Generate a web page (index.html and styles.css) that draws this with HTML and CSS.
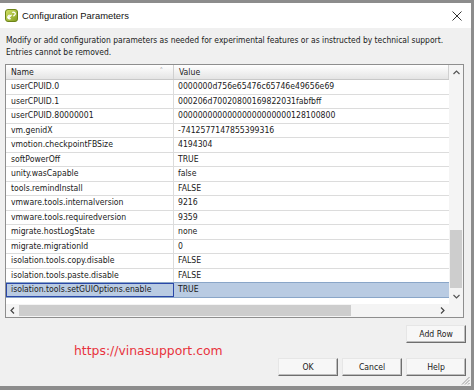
FILE: index.html
```html
<!DOCTYPE html>
<html>
<head>
<meta charset="utf-8">
<link rel="stylesheet" href="styles.css">
</head>
<body>
<div class="window">
  <div class="titlebar">
    <svg class="app-icon" width="13" height="13" viewBox="0 0 13 13">
      <defs>
        <linearGradient id="g" x1="0" y1="0" x2="1" y2="1">
          <stop offset="0" stop-color="#d6e46a"/>
          <stop offset="1" stop-color="#7f9a1c"/>
        </linearGradient>
      </defs>
      <rect x="0.5" y="0.5" width="12" height="12" rx="2.5" fill="url(#g)" stroke="#6d8418"/>
      <path d="M4 8.5 L6.2 6.3 M5.2 9.6 a1.6 1.6 0 0 1 -2.2 -2.2 l1.2 -1.2 M7.8 3.4 a1.6 1.6 0 0 1 2.2 2.2 l-1.2 1.2" fill="none" stroke="#fff" stroke-width="1.3" stroke-linecap="round"/>
    </svg>
    <span class="title">Configuration Parameters</span>
    <svg class="close" width="10" height="10" viewBox="0 0 10 10">
      <path d="M0.5 0.5 L9.5 9.5 M9.5 0.5 L0.5 9.5" stroke="#333" stroke-width="1"/>
    </svg>
  </div>
  <div class="desc">Modify or add configuration parameters as needed for experimental features or as instructed by technical support.<br>Entries cannot be removed.</div>
  <div class="table">
    <div class="list">
      <div class="head">
        <div class="hcell">Name<span class="sort">&#x02C4;</span></div>
        <div class="hcell">Value</div>
      </div>
      <div class="row"><div class="c1">userCPUID.0</div><div class="c2">0000000d756e65476c65746e49656e69</div></div>
      <div class="row"><div class="c1">userCPUID.1</div><div class="c2">000206d70020800169822031fabfbff</div></div>
      <div class="row"><div class="c1">userCPUID.80000001</div><div class="c2">00000000000000000000000128100800</div></div>
      <div class="row"><div class="c1">vm.genidX</div><div class="c2">-7412577147855399316</div></div>
      <div class="row"><div class="c1">vmotion.checkpointFBSize</div><div class="c2">4194304</div></div>
      <div class="row"><div class="c1">softPowerOff</div><div class="c2">TRUE</div></div>
      <div class="row"><div class="c1">unity.wasCapable</div><div class="c2">false</div></div>
      <div class="row"><div class="c1">tools.remindInstall</div><div class="c2">FALSE</div></div>
      <div class="row"><div class="c1">vmware.tools.internalversion</div><div class="c2">9216</div></div>
      <div class="row"><div class="c1">vmware.tools.requiredversion</div><div class="c2">9359</div></div>
      <div class="row"><div class="c1">migrate.hostLogState</div><div class="c2">none</div></div>
      <div class="row"><div class="c1">migrate.migrationId</div><div class="c2">0</div></div>
      <div class="row"><div class="c1">isolation.tools.copy.disable</div><div class="c2">FALSE</div></div>
      <div class="row"><div class="c1">isolation.tools.paste.disable</div><div class="c2">FALSE</div></div>
      <div class="row selected"><div class="c1">isolation.tools.setGUIOptions.enable</div><div class="c2">TRUE</div></div>
    </div>
    <div class="vscroll">
      <svg class="arrow" width="7" height="5" viewBox="0 0 7 5"><path d="M0.5 4 L3.5 1 L6.5 4" fill="none" stroke="#555" stroke-width="1.2"/></svg>
      <div class="vtrack"><div class="vthumb"></div></div>
      <svg class="arrow" width="7" height="5" viewBox="0 0 7 5"><path d="M0.5 1 L3.5 4 L6.5 1" fill="none" stroke="#555" stroke-width="1.2"/></svg>
    </div>
    <div class="hscroll">
      <svg class="harrow" width="5" height="7" viewBox="0 0 5 7"><path d="M4 0.5 L1 3.5 L4 6.5" fill="none" stroke="#444" stroke-width="1.2"/></svg>
      <div class="htrack"><div class="hthumb"></div></div>
      <svg class="harrow" width="5" height="7" viewBox="0 0 5 7"><path d="M1 0.5 L4 3.5 L1 6.5" fill="none" stroke="#444" stroke-width="1.2"/></svg>
    </div>
    <div class="corner"></div>
  </div>
  <div class="addrow"><button class="btn">Add Row</button></div>
  <div class="actions">
    <button class="btn">OK</button>
    <button class="btn">Cancel</button>
    <button class="btn">Help</button>
  </div>
  <div class="watermark">https://vinasupport.com</div>
  <svg class="grip" width="9" height="9" viewBox="0 0 9 9">
    <path d="M8.5 1 L1 8.5 M8.5 4 L4 8.5 M8.5 7 L7 8.5" stroke="#9a9a9a" stroke-width="1"/>
  </svg>
</div>
</body>
</html>
```
FILE: styles.css
```css
html, body {
  margin: 0;
  padding: 0;
}
body {
  background: #8c8c8c;
  width: 474px;
  height: 390px;
  overflow: hidden;
  font-family: "DejaVu Sans Condensed", "DejaVu Sans", sans-serif;
  font-size: 8.6px;
  color: #1a1a1a;
}
.window {
  position: relative;
  margin: 3px 3px 0 0;
  height: 383px;
  background: #f0f0f0;
  display: flex;
  flex-direction: column;
}
.titlebar {
  height: 25px;
  background: #ffffff;
  display: flex;
  align-items: center;
  padding-left: 5px;
  padding-right: 9px;
}
.app-icon {
  flex: none;
}
.title {
  margin-left: 4px;
  font-family: "Liberation Sans", sans-serif;
  font-size: 9.4px;
  color: #111;
  flex: 1;
}
.close {
  flex: none;
}
.desc {
  padding: 6px 6px 0 6px;
  line-height: 12px;
  height: 30px;
  font-size: 8.45px;
  color: #1a1a1a;
}
.table {
  margin-left: 5px;
  width: 457px;
  border: 1px solid #8e8e8e;
  background: #ffffff;
  display: grid;
  grid-template-columns: 1fr 14px;
  grid-template-rows: 239px 13px;
}
.list {
  overflow: hidden;
}
.head {
  display: grid;
  grid-template-columns: 168px 1fr;
  height: 14px;
  background: linear-gradient(#ffffff, #e4e4e4);
  border-bottom: 1px solid #c8c8c8;
}
.hcell {
  padding-left: 5px;
  line-height: 14px;
  position: relative;
  border-right: 1px solid #d0d0d0;
  color: #222;
}
.sort {
  position: absolute;
  right: 10px;
  top: 0;
  color: #b0b0b0;
  font-size: 8px;
}
.row {
  display: grid;
  grid-template-columns: 168px 1fr;
  height: 14.5px;
  box-sizing: border-box;
  border-bottom: 1px solid #dcdcdc;
  line-height: 13.5px;
  white-space: nowrap;
}
.c1 {
  padding-left: 5px;
  border-right: 1px solid #dcdcdc;
  overflow: hidden;
}
.c2 {
  padding-left: 4px;
  overflow: hidden;
}
.row.selected {
  background: #b9cbe2;
  border-top: 1px solid #8aa6c8;
  border-bottom: 1px solid #8aa6c8;
  margin-top: -1px;
  height: 15.5px;
}
.row.selected .c1 {
  box-shadow: inset 0 0 0 1px #2a47a8;
  border-right: none;
  line-height: 13.5px;
}
.vscroll {
  grid-row: 1;
  grid-column: 2;
  background: #f4f4f4;
  display: flex;
  flex-direction: column;
  align-items: center;
  padding: 5px 0 5px;
}
.arrow {
  flex: none;
}
.vtrack {
  flex: 1;
  width: 100%;
  position: relative;
  margin: 4px 0 3px;
}
.vthumb {
  position: absolute;
  left: 1px;
  right: 1px;
  bottom: 3px;
  height: 58px;
  background: #cdcdcd;
}
.hscroll {
  grid-row: 2;
  grid-column: 1;
  background: #f4f4f4;
  display: flex;
  align-items: center;
  padding: 0 4px 0 4px;
}
.harrow {
  flex: none;
}
.htrack {
  flex: 1;
  height: 100%;
  position: relative;
  margin: 0 6px 0 4px;
}
.hthumb {
  position: absolute;
  left: 0;
  top: 1px;
  bottom: 1px;
  width: 332px;
  background: #cdcdcd;
}
.corner {
  grid-row: 2;
  grid-column: 2;
  background: #f4f4f4;
}
.addrow {
  display: flex;
  justify-content: flex-end;
  padding-right: 5px;
  margin-top: 7px;
}
.actions {
  display: flex;
  justify-content: flex-end;
  gap: 4px;
  padding-right: 5px;
  margin-top: 15px;
}
.btn {
  width: 60px;
  height: 18px;
  padding: 0;
  font-family: "DejaVu Sans Condensed", "DejaVu Sans", sans-serif;
  font-size: 8.6px;
  color: #1a1a1a;
  background: #f7f7f7;
  border: 1px solid;
  border-color: #e6e6e6 #6e6e6e #6e6e6e #e6e6e6;
  box-shadow: inset -1px -1px 0 #bdbdbd;
}
.watermark {
  position: absolute;
  left: 74px;
  top: 340px;
  font-family: "DejaVu Sans", sans-serif;
  font-size: 12.4px;
  color: #e8333d;
}
.grip {
  position: absolute;
  right: 1px;
  bottom: 1px;
}
```
